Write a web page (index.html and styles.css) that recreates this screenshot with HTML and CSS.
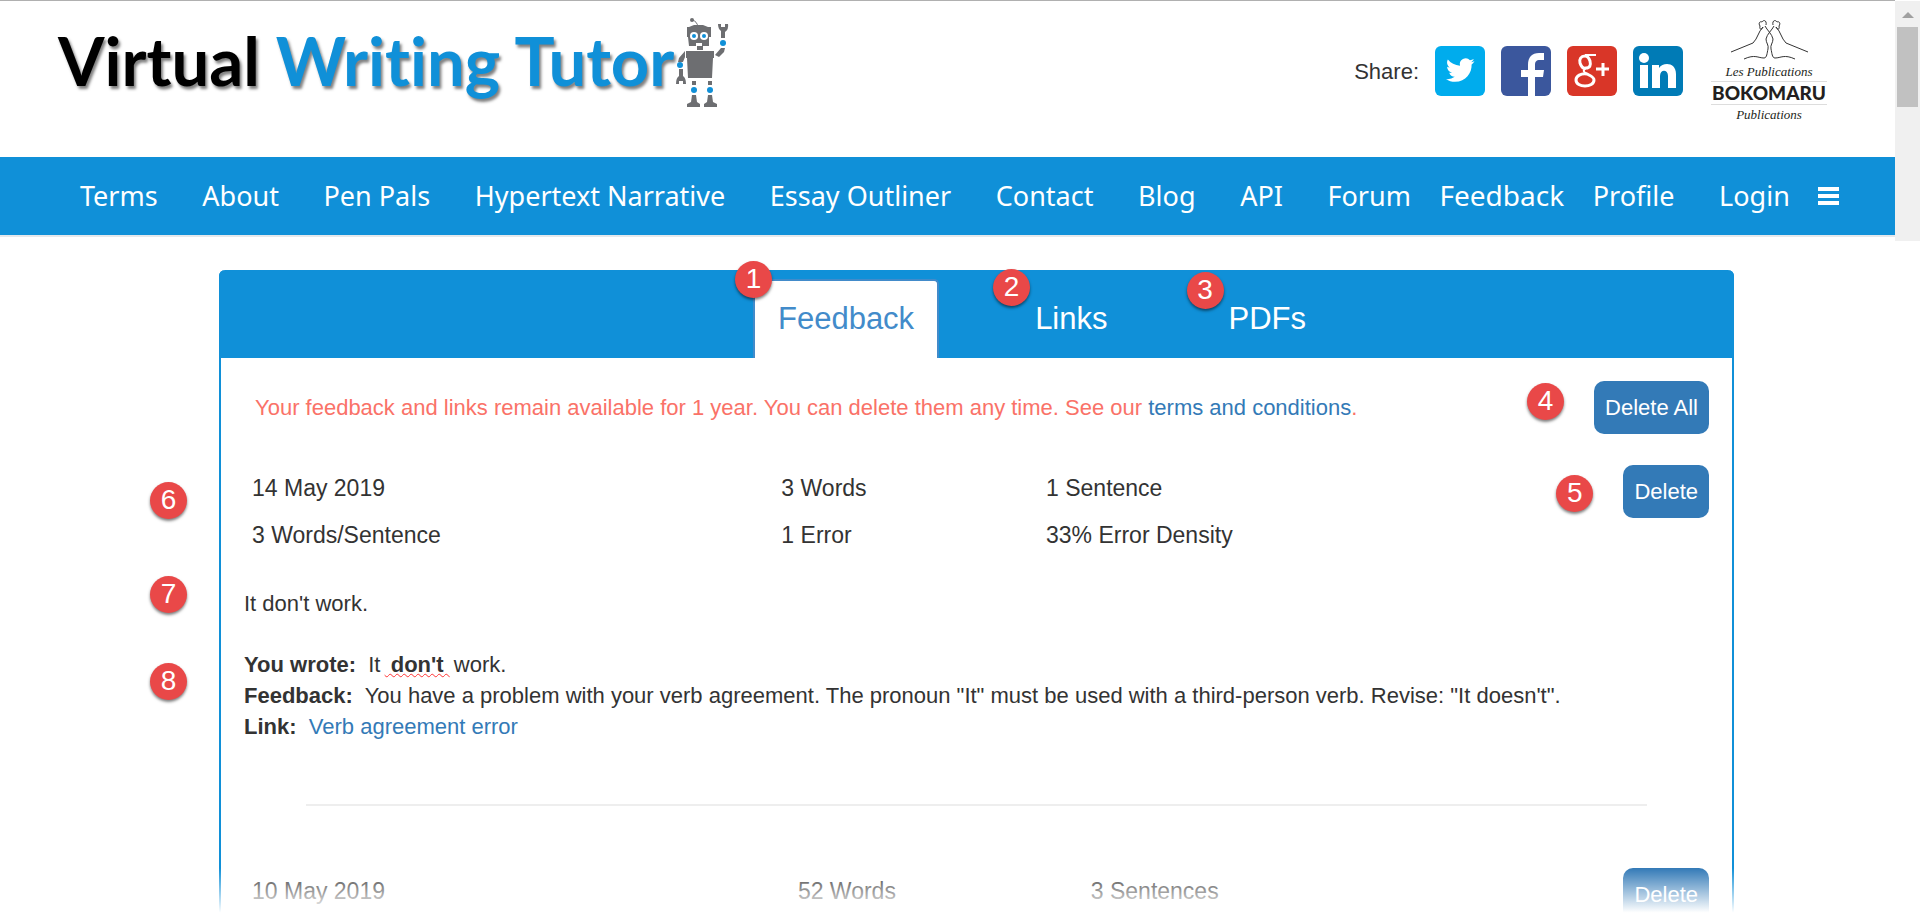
FILE: index.html
```html
<!DOCTYPE html>
<html lang="en">
<head>
<meta charset="UTF-8">
<meta name="viewport" content="width=device-width, initial-scale=1.0">
<title>Virtual Writing Tutor - Feedback</title>
<link rel="stylesheet" href="styles.css">
</head>
<body>

<div class="page">
  <header class="site-header">
    <a class="brand" href="#">
      <span class="brand-name">Virtual <span>Writing Tutor</span></span>
      <svg class="robot" viewBox="0 0 56 90" width="56" height="90" aria-hidden="true">
        <g fill="#6d6e71">
          <circle cx="18" cy="3" r="2"/>
          <path d="M18 3q5 1 6 7" fill="none" stroke="#6d6e71"/>
          <path d="M15 10l5-2h9l5 2h3v10h-2v9h-6v4h-6v-4h-8l-1-9h-1V10z"/>
          <path d="M12 34h28v7h-1l-1 20H14l-1-20h-1z"/>
          <path d="M11 34l-6 7-1 4h5l2-5z"/>
          <path d="M5 52h4v7q3 2 3 8h-3v-3H5v3H2q0-6 3-8z"/>
          <path d="M41 38l6-7h4l-1 4-5 5z"/>
          <path d="M47 21v-7q-3-2-3-7h3v3h4V7h3q1 5-3 8v6z"/>
          <path d="M18 64h4v4h-4zM34 64h4v4h-4z"/>
          <path d="M18 78h4l1 7 3 2v3H13v-3l4-2zM34 78h4l1 7 4 2v3H30v-3l3-2z"/>
        </g>
        <g fill="#fff"><circle cx="20" cy="19" r="4"/><circle cx="30" cy="19" r="4"/><path d="M22 26h6v3h-6z"/></g>
        <g fill="#1090d8">
          <circle cx="20" cy="19" r="2"/><circle cx="30" cy="19" r="2"/>
          <circle cx="6" cy="48" r="3"/><circle cx="49" cy="26" r="3"/>
          <circle cx="20" cy="73" r="3"/><circle cx="36" cy="73" r="3"/>
        </g>
      </svg>
    </a>
    <div class="share">
      <span class="share-label">Share:</span>
      <a href="#" aria-label="Twitter">
        <svg viewBox="0 0 50 50" width="50" height="50">
          <rect width="50" height="50" rx="6" fill="#00aced"/>
          <path transform="translate(10 9) scale(1.25)" fill="#fff" d="M23.6 4.9c-.8.4-1.700.6-2.700.8 1-.6 1.700-1.500 2.100-2.600-.9.5-1.900.9-3 1.100A4.700 4.700 0 0 0 12 8.500C8 8.300 4.600 6.400 2.300 3.600c-1.200 2.100-.6 4.900 1.500 6.300-.8 0-1.500-.2-2.100-.6 0 2.200 1.500 4.200 3.800 4.700-.7.200-1.400.2-2.100.1.600 1.900 2.300 3.200 4.400 3.300A9.500 9.500 0 0 1 .8 19.300c2.100 1.300 4.600 2.100 7.200 2.100 8.700 0 13.600-7.300 13.300-13.900.9-.7 1.700-1.600 2.300-2.600z"/>
        </svg>
      </a>
      <a href="#" aria-label="Facebook">
        <svg viewBox="0 0 50 50" width="50" height="50">
          <rect width="50" height="50" rx="6" fill="#3b579d"/>
          <path fill="#fff" d="M27 50V31h-7v-7h7v-5c0-8 4-12 11-12h5v7h-4c-4 0-5 2-5 5v5h9l-1 7h-8v19z"/>
        </svg>
      </a>
      <a href="#" aria-label="Google Plus">
        <svg viewBox="0 0 50 50" width="50" height="50">
          <rect width="50" height="50" rx="6" fill="#d93628"/>
          <g fill="none" stroke="#fff">
            <path d="M18 10c-4 0-6 3-5 7 1 3 3 6 6 5 4 0 5-3 4-7-1-3-2-5-5-5z" stroke-width="3"/>
            <path d="M18 9h11M19 22c-4 3-2 4 1 6" stroke-width="2"/>
            <path d="M20 28c-6-1-11 2-11 6 0 8 18 8 18 0 0-3-3-4-7-6z" stroke-width="3"/>
            <path d="M29 23h13M36 17v13" stroke-width="3"/>
          </g>
        </svg>
      </a>
      <a href="#" aria-label="LinkedIn">
        <svg viewBox="0 0 50 50" width="50" height="50">
          <rect width="50" height="50" rx="6" fill="#007bb6"/>
          <circle cx="11" cy="12" r="5" fill="#fff"/>
          <path fill="#fff" d="M7 19h8v23H7zM19 19h7v3c4-6 17-6 17 6v14h-8V30c0-7-8-7-8 0v12h-8z"/>
        </svg>
      </a>
    </div>
    <a class="publisher" href="#">
      <svg viewBox="0 0 79 42" width="79" height="42" fill="none" stroke="#333" aria-hidden="true">
        <path d="M1 32l22-9c5-5 5-11 10-16M33 7c-1 3-4 3-3-1-2-3 0-5 2-4 2-3 5-1 4 3M35 6c2 4 7 8 8 13 0 4-3 6-2 10 1 4 1 9 4 9 6 0 9-4 20 1"/>
        <path d="M78 32l-22-9c-5-5-5-11-10-16M46 7c1 3 4 3 3-1 2-3 0-5-2-4-2-3-5-1-4 3M44 6c-2 4-7 8-8 13 0 4 3 6 2 10-1 4-1 9-4 9-6 0-9-4-20 1"/>
      </svg>
      <em>Les Publications</em>
      <strong>BOKOMARU</strong>
      <em>Publications</em>
    </a>
  </header>

  <nav class="menu-bar">
    <ul>
      <li><a href="#">Terms</a></li>
      <li><a href="#">About</a></li>
      <li><a href="#">Pen Pals</a></li>
      <li><a href="#">Hypertext Narrative</a></li>
      <li><a href="#">Essay Outliner</a></li>
      <li><a href="#">Contact</a></li>
      <li><a href="#">Blog</a></li>
      <li><a href="#">API</a></li>
      <li><a href="#">Forum</a></li>
      <li class="current"><a href="#">Feedback</a></li>
      <li><a href="#">Profile</a></li>
      <li><a href="#">Login</a></li>
    </ul>
    <button class="menu-button" type="button" aria-label="Menu">
      <span class="horizontal-line"></span>
      <span class="horizontal-line"></span>
      <span class="horizontal-line"></span>
    </button>
  </nav>

  <main class="panel">
    <div class="tabs">
      <a class="tab active" href="#">Feedback<span class="badge badge-1">1</span></a>
      <a class="tab" href="#">Links<span class="badge badge-2">2</span></a>
      <a class="tab" href="#">PDFs<span class="badge badge-3">3</span></a>
    </div>

    <div class="notice">
      <p>Your feedback and links remain available for 1 year. You can delete them any time. See our <a href="#">terms and conditions</a>.</p>
      <div class="action">
        <button class="delete" type="button">Delete All</button>
        <span class="badge badge-4">4</span>
      </div>
    </div>

    <section class="entry">
      <div class="summary">
        <table class="stats">
          <tr><td class="date">14 May 2019</td><td class="words">3 Words</td><td>1 Sentence</td></tr>
          <tr><td>3 Words/Sentence</td><td>1 Error</td><td>33% Error Density</td></tr>
        </table>
        <div class="action">
          <button class="delete" type="button">Delete</button>
          <span class="badge badge-5">5</span>
        </div>
        <span class="badge badge-6">6</span>
      </div>
      <div class="original">
        <p>It don't work.</p>
        <span class="badge badge-7">7</span>
      </div>
      <div class="correction">
        <p><b>You wrote:</b>&nbsp; It <b class="error">&nbsp;don't&nbsp;</b> work.</p>
        <p><b>Feedback:</b>&nbsp; You have a problem with your verb agreement. The pronoun "It" must be used with a third-person verb. Revise: "It doesn't".</p>
        <p><b>Link:</b>&nbsp; <a href="#">Verb agreement error</a></p>
        <span class="badge badge-8">8</span>
      </div>
    </section>

    <hr>

    <section class="entry">
      <div class="summary">
        <table class="stats stats-wide">
          <tr><td class="date">10 May 2019</td><td class="words">52 Words</td><td>3 Sentences</td></tr>
        </table>
        <div class="action">
          <button class="delete" type="button">Delete</button>
        </div>
      </div>
    </section>
  </main>
</div>

<!-- scroll bar and fade lie over the page -->
<div class="scrollbar"><div class="thumb"></div></div>
<div class="fade"></div>

</body>
</html>
```

FILE: styles.css
```css
* {
  box-sizing: border-box;
}

body {
  margin: 0;
  height: 100vh;
  overflow: hidden;
  position: relative;
  background-color: #fff;
  color: #333;
  font-family: "Liberation Sans", Arial, sans-serif;
  font-size: 22px;
  line-height: 31px;
}

a {
  color: #337ab7;
  text-decoration: none;
}

p {
  margin: 0;
}

.page {
  margin-right: 25px;
}

/* Header */
.site-header {
  display: flex;
  align-items: flex-start;
  height: 157px;
  padding: 0 68px 0 58px;
  border-top: 1px solid #b0b0b0;
}

.brand {
  display: flex;
  margin-right: auto;
  padding-top: 16px;
}

.brand-name {
  color: #000;
  font-family: Lato, sans-serif;
  font-size: 67px;
  font-weight: 700;
  font-variant-ligatures: none;
  line-height: 86px;
  white-space: nowrap;
  text-shadow: 2px 3px 3px rgba(0, 0, 0, 0.5);
}

.brand-name span {
  color: #1090d8;
}

.share {
  display: flex;
  align-items: center;
  gap: 16px;
  padding-top: 45px;
}

.share a,
.share svg {
  display: block;
}

/* Publisher logo */
.publisher {
  display: flex;
  flex-direction: column;
  align-items: center;
  width: 116px;
  margin-left: 28px;
  padding-top: 19px;
  color: #231f20;
}

.publisher em {
  font-family: "Liberation Serif", serif;
  font-size: 13px;
  line-height: 19px;
}

.publisher strong {
  width: 100%;
  border: solid #ddd;
  border-width: 1px 0;
  font-family: Lato, sans-serif;
  font-size: 19px;
  font-weight: 900;
  line-height: 22px;
  text-align: center;
}

/* Menu bar */
.menu-bar {
  display: flex;
  align-items: center;
  height: 78px;
  padding: 2px 56px 0 80px;
  background-color: #1090d8;
  box-shadow: 0 2px 0 #e4e8ec;
}

.menu-bar ul {
  display: flex;
  flex: 1;
  align-items: center;
  justify-content: space-between;
  list-style: none;
  margin: 0;
  padding: 0;
}

.menu-bar a {
  color: #fff;
  font-family: "Noto Sans", sans-serif;
  font-size: 27px;
  white-space: nowrap;
}

.menu-bar .current {
  margin: 0 -16px;
}

.menu-bar .current a {
  font-size: 28px;
}

.menu-button {
  margin-left: 28px;
  padding: 0 0 2px;
  border: 0;
  background: none;
}

.horizontal-line {
  display: block;
  width: 21px;
  height: 4px;
  margin: 3px 0;
  background-color: #fff;
}

/* Feedback panel */
.panel {
  margin: 35px 161px 0 219px;
  border: 2px solid #1090d8;
  border-top: 0;
  border-radius: 6px 6px 0 0;
}

.tabs {
  display: flex;
  justify-content: center;
  gap: 71px;
  height: 88px;
  margin: 0 -2px;
  padding: 9px 0 0 131px;
  background-color: #1090d8;
  border-radius: 6px 6px 0 0;
}

.tab {
  position: relative;
  padding: 0 23px;
  border: 2px solid transparent;
  border-bottom: 0;
  color: #fff;
  font-size: 31px;
  line-height: 76px;
}

.tab.active {
  background-color: #fff;
  border-color: #428bca;
  border-radius: 5px 5px 0 0;
  color: #428bca;
}

/* Numbered markers */
.badge {
  position: absolute;
  width: 37px;
  height: 37px;
  border-radius: 50%;
  background-color: #e94848;
  box-shadow: 0 2px 3px rgba(0, 0, 0, 0.5);
  color: #fff;
  font-size: 28px;
  font-weight: normal;
  line-height: 35px;
  text-align: center;
}

.badge-1 {
  top: -20px;
  left: -20px;
}

.badge-2 {
  top: -12px;
  left: -19px;
}

.badge-3 {
  top: -9px;
  left: -19px;
}

.badge-4,
.badge-5 {
  top: 2px;
  right: calc(100% + 30px);
}

.badge-5 {
  top: 10px;
}

.badge-6,
.badge-7,
.badge-8 {
  top: 17px;
  left: -71px;
}

.badge-8 {
  top: 44px;
}

.notice,
.summary {
  display: flex;
  justify-content: space-between;
  padding: 23px 23px 0 34px;
}

.notice p {
  padding-top: 11px;
  color: #fa7268;
}

.action {
  position: relative;
}

.delete {
  display: block;
  height: 53px;
  padding: 0 11px;
  border: 0;
  border-radius: 10px;
  background-color: #337ab7;
  color: #fff;
  font-family: inherit;
  font-size: 22px;
}

.entry {
  padding-top: 31px;
}

.summary {
  position: relative;
  align-items: flex-start;
  padding: 0 23px 0 31px;
}

.stats {
  flex: 1;
  margin-right: 48px;
  border-collapse: collapse;
  font-size: 23px;
}

.stats td {
  height: 47px;
  padding: 0;
}

.stats .date {
  width: 40%;
}

.stats .words {
  width: 20%;
}

.stats-wide {
  margin-right: 40px;
}

.stats-wide .date {
  width: 41%;
}

.stats-wide .words {
  width: 22%;
}

.original,
.correction {
  position: relative;
  padding: 30px 23px 0;
}

.original {
  padding-top: 29px;
}

.error {
  margin: 0 -2px;
  text-decoration: underline wavy #f33 1px;
}

hr {
  height: 2px;
  margin: 62px 85px 31px;
  border: 0;
  background-color: #eee;
}

.scrollbar {
  position: absolute;
  top: 1px;
  right: 0;
  width: 25px;
  height: 240px;
  padding: 11px 2px 0 2px;
  background-color: #f0f0f0;
}

.scrollbar::before {
  content: "";
  display: block;
  width: 0;
  margin: 0 auto 9px;
  border: 6px solid transparent;
  border-top: 0;
  border-bottom-color: #a0a0a0;
}

.thumb {
  height: 80px;
  background-color: #c1c1c1;
}

.fade {
  position: absolute;
  right: 0;
  bottom: 0;
  left: 0;
  height: 47px;
  background: linear-gradient(rgba(255, 255, 255, 0), #fff 95%);
}
```
